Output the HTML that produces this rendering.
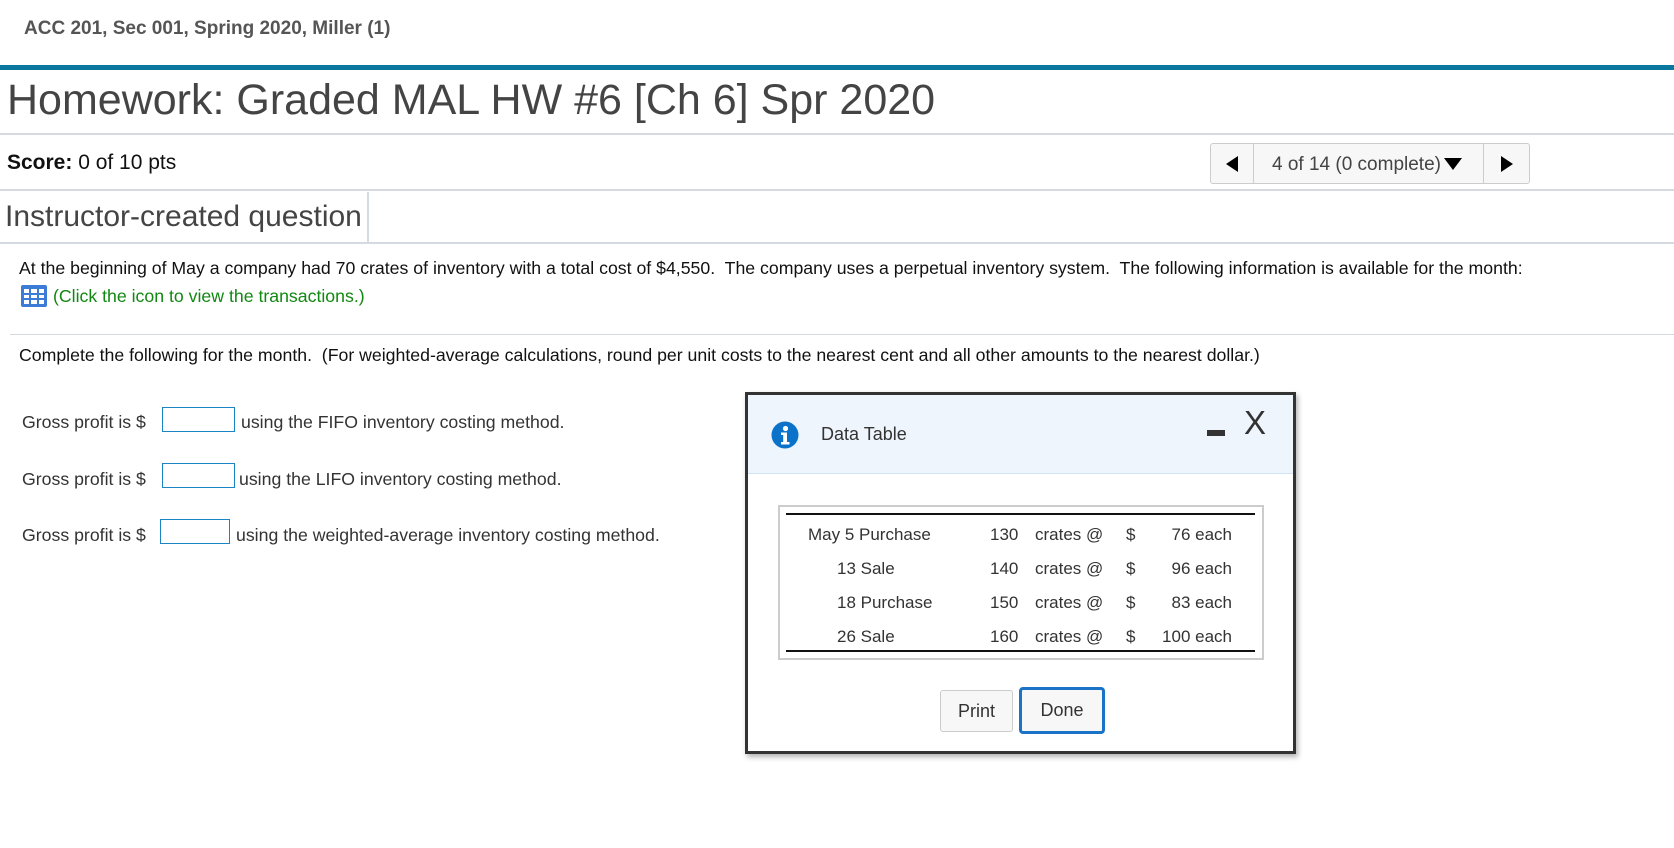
<!DOCTYPE html><html><head><meta charset="utf-8"><style>
*{margin:0;padding:0;box-sizing:border-box}
body{width:1674px;height:848px;position:relative;background:#fff;font-family:"Liberation Sans",Arial,sans-serif;color:#222;overflow:hidden}
.a{position:absolute;white-space:nowrap}
.hl{position:absolute;height:2px;background:#d5d9e0}
.in{position:absolute;width:73px;height:25px;border:1px solid #1b84c4;background:#fff}
.t{position:absolute;font-size:17px;color:#333;line-height:20px;white-space:nowrap}
.q{font-size:17.7px}
</style></head><body>
<div class="a" style="left:24px;top:18px;font-size:19px;font-weight:bold;color:#555">ACC 201, Sec 001, Spring 2020, Miller (1)</div>
<div class="a" style="left:0;top:65px;width:1674px;height:5px;background:#0a779e"></div>
<div class="a" style="left:7px;top:76px;font-size:43px;color:#444">Homework: Graded MAL HW #6 [Ch 6] Spr 2020</div>
<div class="hl" style="left:0;top:133px;width:1674px"></div>
<div class="a" style="left:7px;top:151px;font-size:21px;color:#111"><b>Score:</b> 0 of 10 pts</div>
<div class="a" style="left:1210px;top:143px;width:320px;height:41px;border:1px solid #ccc;border-radius:3px;background:#f7f7f7"></div>
<div class="a" style="left:1253px;top:144px;width:1px;height:39px;background:#ccc"></div>
<div class="a" style="left:1483px;top:144px;width:1px;height:39px;background:#ccc"></div>
<div class="a" style="left:1226px;top:156px;width:0;height:0;border-top:8px solid transparent;border-bottom:8px solid transparent;border-right:12px solid #000"></div>
<div class="a" style="left:1501px;top:156px;width:0;height:0;border-top:8px solid transparent;border-bottom:8px solid transparent;border-left:12px solid #000"></div>
<div class="a" style="left:1272px;top:154px;font-size:19px;color:#444">4 of 14 (0 complete)</div>
<div class="a" style="left:1444px;top:158px;width:0;height:0;border-left:9px solid transparent;border-right:9px solid transparent;border-top:12px solid #000"></div>
<div class="hl" style="left:0;top:189px;width:1674px"></div>
<div class="a" style="left:5px;top:200px;font-size:30px;color:#444">Instructor-created question</div>
<div class="a" style="left:367px;top:192px;width:2px;height:50px;background:#d5d9e0"></div>
<div class="hl" style="left:0;top:242px;width:1674px"></div>
<div class="t q" style="left:19px;top:258px;color:#111">At the beginning of May a company had 70 crates of inventory with a total cost of $4,550.&nbsp; The company uses a perpetual inventory system.&nbsp; The following information is available for the month:</div>
<svg class="a" style="left:21px;top:285px" width="26" height="22" viewBox="0 0 26 22"><rect x="0" y="0" width="26" height="22" rx="2" fill="#3c7bd6"/><g fill="#fff"><rect x="3" y="4" width="5" height="4"/><rect x="10" y="4" width="6" height="4"/><rect x="18" y="4" width="5" height="4"/><rect x="3" y="10" width="5" height="3"/><rect x="10" y="10" width="6" height="3"/><rect x="18" y="10" width="5" height="3"/><rect x="3" y="15" width="5" height="4"/><rect x="10" y="15" width="6" height="4"/><rect x="18" y="15" width="5" height="4"/></g></svg>
<div class="t q" style="left:53px;top:286px;color:#118811">(Click the icon to view the transactions.)</div>
<div class="hl" style="left:10px;top:334px;width:1664px;height:1px"></div>
<div class="t q" style="left:19px;top:345px;color:#111">Complete the following for the month.&nbsp; (For weighted-average calculations, round per unit costs to the nearest cent and all other amounts to the nearest dollar.)</div>
<div class="t q" style="left:22px;top:412px">Gross profit is $</div><div class="in" style="left:162px;top:407px"></div><div class="t q" style="left:241px;top:412px">using the FIFO inventory costing method.</div>
<div class="t q" style="left:22px;top:469px">Gross profit is $</div><div class="in" style="left:162px;top:463px"></div><div class="t q" style="left:239px;top:469px">using the LIFO inventory costing method.</div>
<div class="t q" style="left:22px;top:525px">Gross profit is $</div><div class="in" style="left:160px;top:519px;width:70px"></div><div class="t q" style="left:236px;top:525px">using the weighted-average inventory costing method.</div>

<div class="a" style="left:745px;top:392px;width:551px;height:362px;border:3px solid #333;background:#fff;box-shadow:2px 3px 5px rgba(0,0,0,.3)"></div>
<div class="a" style="left:748px;top:395px;width:545px;height:79px;background:#eff5fd;border-bottom:1px solid #cfe3f5"></div>
<svg class="a" style="left:771px;top:421px" width="28" height="28" viewBox="0 0 28 28"><circle cx="14" cy="14" r="13.5" fill="#0a72c9"/><circle cx="14.5" cy="7.5" r="2.6" fill="#fff"/><path d="M10 11.5h6v9.5h2.5v2.5h-8.5v-2.5h2.2v-7h-2.2z" fill="#fff"/></svg>
<div class="a" style="left:821px;top:424px;font-size:18px;color:#333">Data Table</div>
<div class="a" style="left:1207px;top:430px;width:18px;height:6px;background:#333"></div>
<div class="a" style="left:1244px;top:404px;font-size:33px;color:#333">X</div>
<div class="a" style="left:778px;top:505px;width:486px;height:155px;border:2px solid #ccc"></div>
<div class="a" style="left:786px;top:513px;width:469px;height:2px;background:#111"></div>
<div class="a" style="left:786px;top:650px;width:469px;height:2px;background:#111"></div>
<div class="t" style="left:808px;top:525px">May 5 Purchase</div><div class="t" style="left:837px;top:559px">13 Sale</div><div class="t" style="left:837px;top:593px">18 Purchase</div><div class="t" style="left:837px;top:627px">26 Sale</div>
<div class="t" style="left:990px;top:525px">130</div><div class="t" style="left:990px;top:559px">140</div><div class="t" style="left:990px;top:593px">150</div><div class="t" style="left:990px;top:627px">160</div>
<div class="t" style="left:1035px;top:525px">crates @</div><div class="t" style="left:1035px;top:559px">crates @</div><div class="t" style="left:1035px;top:593px">crates @</div><div class="t" style="left:1035px;top:627px">crates @</div>
<div class="t" style="left:1126px;top:525px">$</div><div class="t" style="left:1126px;top:559px">$</div><div class="t" style="left:1126px;top:593px">$</div><div class="t" style="left:1126px;top:627px">$</div>
<div class="t" style="left:1160px;top:525px;width:72px;text-align:right">76 each</div><div class="t" style="left:1160px;top:559px;width:72px;text-align:right">96 each</div><div class="t" style="left:1160px;top:593px;width:72px;text-align:right">83 each</div><div class="t" style="left:1160px;top:627px;width:72px;text-align:right">100 each</div>
<div class="a" style="left:940px;top:690px;width:73px;height:42px;border:1px solid #ccc;border-radius:3px;background:#f7f7f7;font-size:18px;color:#333;text-align:center;line-height:40px">Print</div>
<div class="a" style="left:1019px;top:687px;width:86px;height:47px;border:3px solid #1a73c6;border-radius:4px;background:#f7f7f7;font-size:18px;color:#333;text-align:center;line-height:41px">Done</div>
</body></html>
